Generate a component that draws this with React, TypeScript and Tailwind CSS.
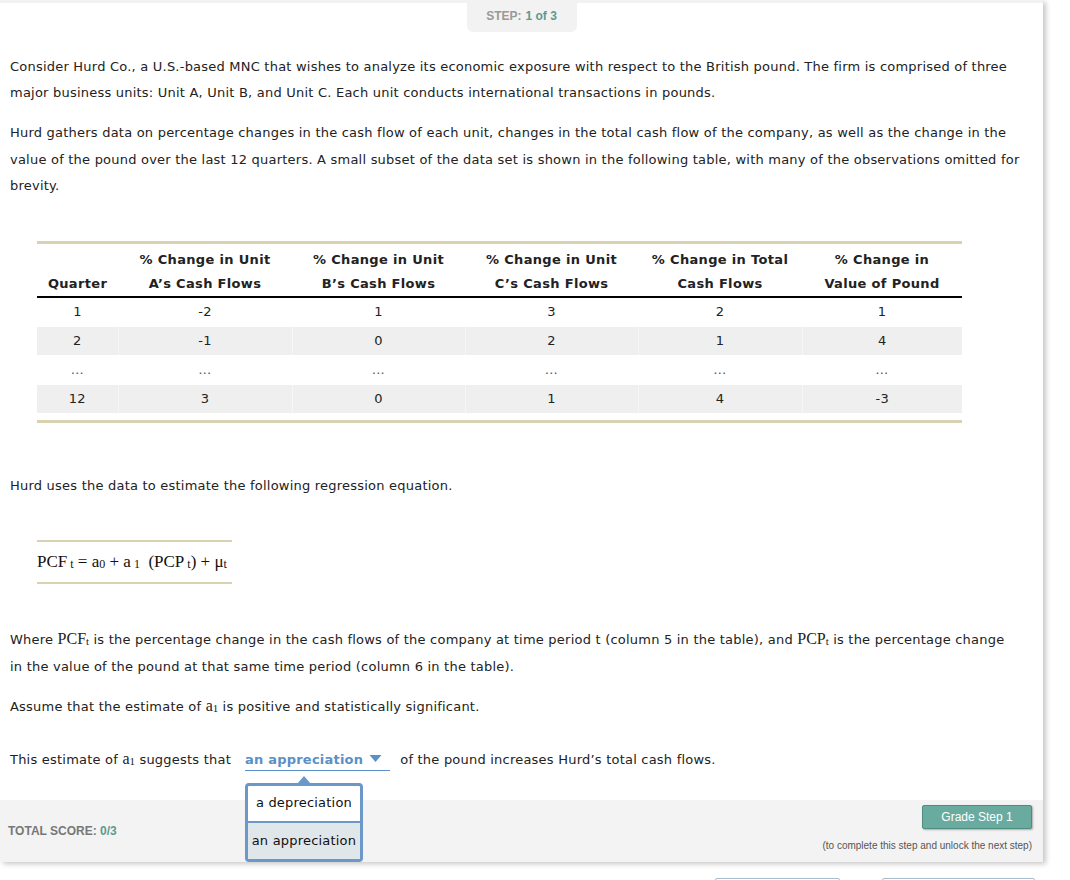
const headers = [
  ["", "Quarter"],
  ["% Change in Unit", "A’s Cash Flows"],
  ["% Change in Unit", "B’s Cash Flows"],
  ["% Change in Unit", "C’s Cash Flows"],
  ["% Change in Total", "Cash Flows"],
  ["% Change in", "Value of Pound"],
];

const widths = [81, 174, 173, 173, 164, 160];

const data = [
  ["1", "-2", "1", "3", "2", "1"],
  ["2", "-1", "0", "2", "1", "4"],
  ["…", "…", "…", "…", "…", "…"],
  ["12", "3", "0", "1", "4", "-3"],
];

function Sub({ children, big }: { children: React.ReactNode; big?: boolean }) {
  return (
    <span className={`align-[-1px] font-['Liberation_Serif',serif] tracking-normal ${big ? "text-[12px]" : "text-[11px]"}`}>
      {children}
    </span>
  );
}

function Serif({ children }: { children: React.ReactNode }) {
  return <span className="font-['Liberation_Serif',serif] text-[16px] tracking-normal">{children}</span>;
}

export default function App() {
  return (
    <div className="min-h-[880px] bg-white font-['DejaVu_Sans',Verdana,sans-serif] text-[13px] tracking-[0.22px] text-[#222]">
      <div className="relative w-[1043px] bg-white shadow-[3px_2px_5px_rgba(0,0,0,0.22)]">
        <div className="h-[3px] bg-[#f2f2f2]" />
        {/* step tab */}
        <div className="flex justify-center">
          <div className="flex h-[29px] w-[110px] items-center justify-center rounded-b-md bg-[#f2f2f2] pb-[3px] font-['Liberation_Sans',Arial,sans-serif] text-[12px] font-bold tracking-normal">
            <span className="text-[#999]">STEP:</span>
            <span className="ml-1 text-[#5b9a91]">1 of 3</span>
          </div>
        </div>

        <div className="pl-[10px] pr-[16px]">
          <p className="mt-[22px] leading-[26px]">
            Consider Hurd Co., a U.S.-based MNC that wishes to analyze its economic exposure with respect to the British pound. The
            firm is comprised of three major business units: Unit A, Unit B, and Unit C. Each unit conducts international transactions in
            pounds.
          </p>
          <p className="mt-[14px] leading-[26.5px]">
            Hurd gathers data on percentage changes in the cash flow of each unit, changes in the total cash flow of the company, as
            well as the change in the value of the pound over the last 12 quarters. A small subset of the data set is shown in the
            following table, with many of the observations omitted for brevity.
          </p>

          {/* data table */}
          <div className="ml-[27px] mt-[41px] w-[925px] border-t-[3px] border-b-[3px] border-[#d9d2b0] pb-[7px]">
            <table className="w-[925px] table-fixed border-collapse tracking-[0.33px]">
              <colgroup>
                {widths.map((w, i) => (
                  <col key={i} style={{ width: w }} />
                ))}
              </colgroup>
              <thead>
                <tr className="border-b-2 border-black">
                  {headers.map((h, i) => (
                    <th key={i} className="pt-[4px] text-center align-bottom text-[13px] font-bold leading-[24px]">
                      {h[0] && <div>{h[0]}</div>}
                      <div>{h[1]}</div>
                    </th>
                  ))}
                </tr>
              </thead>
              <tbody>
                {data.map((row, r) => (
                  <tr key={r} className={r % 2 === 1 ? "h-[28px] bg-[#efefef]" : "h-[30px]"}>
                    {row.map((c, i) => (
                      <td
                        key={i}
                        className={`text-center ${r % 2 === 1 && i < 5 ? "border-r border-[#f7f7f7]" : ""} ${
                          c === "…" ? "text-[#555]" : ""
                        }`}
                      >
                        {c}
                      </td>
                    ))}
                  </tr>
                ))}
              </tbody>
            </table>
          </div>

          <p className="mt-[50px] leading-[26px]">Hurd uses the data to estimate the following regression equation.</p>

          {/* equation */}
          <div className="ml-[27px] mt-[41px] flex h-[44px] w-[195px] items-center border-t-[2px] border-b-[2px] border-[#d9d2b0] font-['Liberation_Serif',serif] text-[17px] tracking-normal text-[#111]">
            <span>
              PCF<Sub big>&nbsp;t</Sub>&nbsp;= a<Sub big>0</Sub>&nbsp;+ a<Sub big>&nbsp;1</Sub>&nbsp;&nbsp;(PCP<Sub big>&nbsp;t</Sub>) + μ
              <Sub big>t</Sub>
            </span>
          </div>

          <p className="mr-[8px] mt-[42px] leading-[26.5px]">
            Where <Serif>PCF</Serif>
            <Sub>t</Sub> is the percentage change in the cash flows of the company at time period t (column 5 in the table), and{" "}
            <Serif>PCP</Serif>
            <Sub>t</Sub> is the percentage change in the value of the pound at that same time period (column 6 in the table).
          </p>
          <p className="mt-[12px] leading-[26px]">
            Assume that the estimate of <Serif>a</Serif>
            <Sub>1</Sub> is positive and statistically significant.
          </p>

          <div className="mt-[25px] flex items-center leading-[26px]">
            <span>
              This estimate of <Serif>a</Serif>
              <Sub>1</Sub> suggests that
            </span>
            <span className="relative ml-[14px]">
              <span className="flex items-center border-b border-[#5b8fc7] pr-[8px] leading-[21px]">
                <span className="font-bold text-[#5b8fc7]">an appreciation</span>
                <svg viewBox="0 0 12 8" className="ml-[6px] h-[8px] w-[13px]">
                  <path d="M0 0h12L6 7z" fill="#5b8fc7" />
                </svg>
              </span>
              {/* open menu */}
              <div className="absolute left-0 top-[27px] z-10 w-[118px]">
                <div className="flex justify-center pl-[1px]">
                  <svg viewBox="0 0 14 8" className="-mb-px h-[8px] w-[14px]">
                    <path d="M0 8L7 0l7 8z" fill="#6c98c9" />
                  </svg>
                </div>
                <div className="overflow-hidden rounded-[4px] border-[3px] border-[#6c98c9] bg-white text-[13px] tracking-[0.2px] text-[#111]">
                  <div className="flex h-[37px] items-center justify-center border-b-2 border-[#6c98c9]">a depreciation</div>
                  <div className="flex h-[36px] items-center justify-center bg-[#e0e7ea]">an appreciation</div>
                </div>
              </div>
            </span>
            <span className="ml-[10px]">of the pound increases Hurd’s total cash flows.</span>
          </div>
        </div>

        {/* footer */}
        <div className="mt-[26px] flex h-[62px] items-start justify-between bg-[#f3f3f3] font-['Liberation_Sans',Arial,sans-serif] tracking-normal">
          <div className="pl-[8px] pt-[22px] text-[12px] font-bold text-[#777]">
            TOTAL SCORE: <span className="text-[#5b9a8e]">0/3</span>
          </div>
          <div className="flex flex-col items-end pr-[11px] pt-[5px]">
            <button className="h-[24px] w-[110px] rounded-[2px] border border-[#4f8c81] bg-[#6aab9f] text-[12px] text-white shadow-[1px_1px_2px_rgba(0,0,0,0.3)]">
              Grade Step 1
            </button>
            <div className="mt-[9px] text-[10px] text-[#555]">(to complete this step and unlock the next step)</div>
          </div>
        </div>
      </div>

      {/* buttons below, cut off by the window */}
      <div className="mt-[16px] flex w-[1043px] gap-[42px] pl-[715px]">
        <div className="h-[30px] w-[125px] rounded-[2px] border border-[#a9bccb] bg-white" />
        <div className="h-[30px] w-[153px] rounded-[2px] border border-[#a9bccb] bg-white" />
      </div>
    </div>
  );
}
